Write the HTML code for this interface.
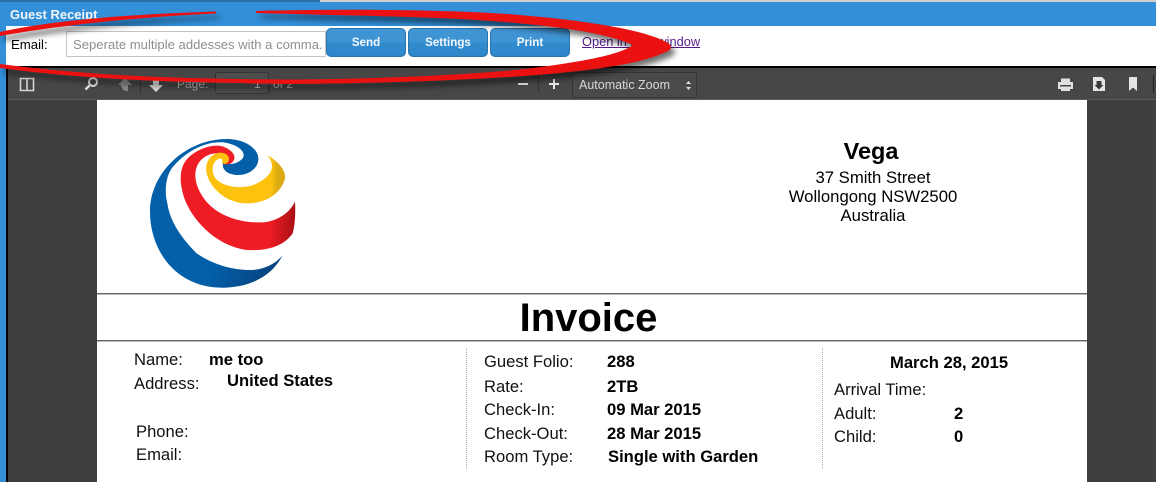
<!DOCTYPE html>
<html><head><meta charset="utf-8">
<style>
html,body{margin:0;padding:0;}
body{width:1156px;height:482px;overflow:hidden;position:relative;background:#fff;font-family:"Liberation Sans",sans-serif;}
.a{position:absolute;white-space:nowrap;}
.t{position:absolute;white-space:nowrap;line-height:20px;height:20px;font-size:16.600px;color:#111;margin-top:1px;}
.b{font-weight:bold;color:#000;}
.btn{position:absolute;top:28px;height:29px;box-sizing:border-box;border:1px solid #2a75ae;border-radius:5px;background:linear-gradient(#4195d5,#3f94d4 45%,#308bcf 55%,#2e86c8);color:#f4f9fd;font-weight:bold;font-size:11.600px;text-align:center;line-height:28px;}
svg{position:absolute;}
</style></head><body>
<div class="a" style="left:0;top:0;width:1156px;height:2px;background:#cfcfcf"></div>
<div class="a" style="left:0;top:0;width:320px;height:2px;background:#2b6ea8"></div>
<div class="a" style="left:0;top:2px;width:1156px;height:24px;background:#328fd8"></div>
<div class="a" style="left:0;top:26px;width:6px;height:456px;background:#328fd8"></div>
<div class="a" style="left:6px;top:26px;width:1150px;height:40px;background:#fff"></div>
<div class="a" style="left:10px;top:5px;color:#f2f7fc;font-weight:bold;font-size:13px;line-height:20px;">Guest Receipt</div>
<div class="a" style="left:11px;top:36px;color:#000;font-size:13.200px;line-height:18px;">Email:</div>
<div class="a" style="left:66px;top:31px;width:260px;height:26px;box-sizing:border-box;border:1px solid #c4c4c4;background:#fff;color:#8f8f8f;font-size:13.100px;line-height:26px;padding-left:6px;overflow:hidden;">Seperate multiple addesses with a comma.</div>
<div class="btn" style="left:326px;width:80px;">Send</div>
<div class="btn" style="left:408px;width:80px;">Settings</div>
<div class="btn" style="left:490px;width:80px;">Print</div>
<div class="a" style="left:582px;top:33px;color:#551a8b;font-size:12.800px;line-height:18px;text-decoration:underline;">Open in new window</div>

<div class="a" style="left:6px;top:66px;width:1150px;height:2px;background:#000"></div>
<div class="a" style="left:6px;top:68px;width:2px;height:414px;background:#000"></div>
<div class="a" style="left:8px;top:68px;width:1148px;height:414px;background:#3f3f3f"></div>
<div class="a" style="left:8px;top:68px;width:1148px;height:32px;background:#474747;box-shadow:inset 0 -1px 0 #5a5a5a"></div>

<svg style="left:0;top:68px" width="1156" height="32" viewBox="0 68 1156 32">
<path d="M20.500 78.500H33.500V90.500H20.500ZM27 78.500V90.500" fill="none" stroke="#d4d4d4" stroke-width="1.600"/>
<circle cx="93" cy="82" r="4" fill="none" stroke="#e0e0e0" stroke-width="2"/>
<path d="M89.500 85.500L85.500 89.500" stroke="#e0e0e0" stroke-width="2.500"/>
<path d="M118 85L125 78L132 85H128V91C126 91 122 91 121 85Z" fill="#8a8a8a"/>
<path d="M149 85L156 92L163 85H159V79H153V85Z" fill="#dadada"/>
<rect x="140" y="76" width="1" height="18" fill="#333"/>
<rect x="215.500" y="72.500" width="53" height="21" rx="2" fill="#4d4d4d" stroke="#333"/>
<rect x="518" y="83" width="10" height="2" fill="#e0e0e0"/>
<rect x="538" y="76" width="1" height="16" fill="#333"/>
<path d="M549 84H559M554 79V89" stroke="#e8e8e8" stroke-width="2"/>
<rect x="572.500" y="72.500" width="124" height="25" rx="2" fill="#4a4a4a" stroke="#363636"/>
<path d="M686 84L688.500 81L691 84ZM686 87L688.500 90L691 87Z" fill="#e0e0e0"/>
<path d="M1061 78.500H1070V82H1073V89H1070V91H1061V89H1058V82H1061Z" fill="#e0e0e0"/>
<rect x="1060" y="85" width="11" height="1.500" fill="#474747"/>
<path d="M1093 77H1102L1105 80V91H1093Z" fill="#e4e4e4"/>
<path d="M1096.500 81H1101.500V85H1103.500L1099 89.500L1094.500 85H1096.500Z" fill="#3a3a3a"/>
<path d="M1129 77H1137V91L1133 87.500L1129 91Z" fill="#e4e4e4"/>
<rect x="1153" y="75" width="1" height="18" fill="#222"/>
</svg>
<div class="a" style="left:177px;top:76px;color:#b5b5b5;font-size:12px;line-height:16px;">Page:</div>
<div class="a" style="left:254px;top:76px;color:#cfcfcf;font-size:12px;line-height:16px;">1</div>
<div class="a" style="left:273px;top:76px;color:#b5b5b5;font-size:12px;line-height:16px;">of 2</div>
<div class="a" style="left:579px;top:77px;color:#d9d9d9;font-size:12.500px;line-height:16px;">Automatic Zoom</div>

<div class="a" style="left:97px;top:100px;width:990px;height:382px;background:#fff"></div>

<svg style="left:130px;top:125px" width="180" height="175" viewBox="0 0 540 525">
<defs>
<linearGradient id="bl" x1="0.500" y1="0.800" x2="0.900" y2="1"><stop offset="0" stop-color="#0360a8"/><stop offset="1" stop-color="#07427f"/></linearGradient>
<linearGradient id="rd" x1="0.500" y1="0" x2="1" y2="0"><stop offset="0.550" stop-color="#ee1c25"/><stop offset="1" stop-color="#a80f14"/></linearGradient>
<linearGradient id="yl" x1="0.500" y1="0" x2="1" y2="0"><stop offset="0.650" stop-color="#fdc20e"/><stop offset="0.800" stop-color="#dcaa12"/></linearGradient>
</defs>
<path fill="url(#bl)" d="M457 392C420 465 340 490 270 488C140 485 60 380 60 260C60 140 170 42 290 42C350 42 388 75 385 105C382 135 350 150 325 150C295 150 272 135 280 110C292 122 322 118 338 100C350 82 325 58 280 52C225 48 165 80 125 130C105 160 104 205 112 235C120 290 155 340 200 385C250 420 310 435 360 435C400 435 435 418 457 392Z"/>
<path fill="url(#rd)" d="M495 230C497 265 495 300 488 325C460 365 410 378 350 375C270 365 195 300 165 225C145 170 148 125 175 98C205 70 250 55 280 65C305 75 318 90 312 105C305 118 290 122 278 115C290 112 298 100 285 92C262 78 225 85 205 115C188 145 195 185 225 225C265 275 335 295 400 292C445 288 480 262 495 230Z"/>
<path fill="url(#yl)" d="M412 90C445 110 468 135 465 160C455 200 415 235 350 235C290 235 240 190 230 145C222 110 245 85 270 83C290 83 300 95 296 108C290 120 282 118 275 112C280 105 275 98 265 102C248 110 242 135 255 158C275 185 330 195 375 178C425 155 440 125 412 90Z"/>
</svg>

<div class="a" style="left:756px;top:137px;width:230px;text-align:center;font-weight:bold;font-size:23.500px;line-height:28px;color:#000;">Vega</div>
<div class="a" style="left:758px;top:168px;width:230px;text-align:center;font-size:16.700px;line-height:19px;color:#000;">37 Smith Street<br>Wollongong NSW2500<br>Australia</div>

<div class="a" style="left:97px;top:293px;width:990px;height:2px;background:linear-gradient(#666 50%,#bbb 50%)"></div>
<div class="a" style="left:97px;top:340px;width:990px;height:2px;background:linear-gradient(#666 50%,#bbb 50%)"></div>
<div class="a" style="left:90px;top:295px;width:997px;text-align:center;font-weight:bold;font-size:40px;line-height:46px;color:#000;">Invoice</div>

<div class="a" style="left:466px;top:348px;width:0;height:121px;border-left:1px dotted #aaa"></div>
<div class="a" style="left:822px;top:348px;width:0;height:121px;border-left:1px dotted #aaa"></div>

<div class="t" style="left:134px;top:349px;">Name:</div>
<div class="t b" style="left:209px;top:349px;">me too</div>
<div class="t" style="left:134px;top:373px;">Address:</div>
<div class="t b" style="left:227px;top:370px;">United States</div>
<div class="t" style="left:136px;top:421px;">Phone:</div>
<div class="t" style="left:136px;top:444px;">Email:</div>

<div class="t" style="left:484px;top:351px;">Guest Folio:</div>
<div class="t b" style="left:607px;top:351px;">288</div>
<div class="t" style="left:484px;top:376px;">Rate:</div>
<div class="t b" style="left:607px;top:376px;">2TB</div>
<div class="t" style="left:484px;top:399px;">Check-In:</div>
<div class="t b" style="left:607px;top:399px;">09 Mar 2015</div>
<div class="t" style="left:484px;top:423px;">Check-Out:</div>
<div class="t b" style="left:607px;top:423px;">28 Mar 2015</div>
<div class="t" style="left:484px;top:446px;">Room Type:</div>
<div class="t b" style="left:608px;top:446px;">Single with Garden</div>

<div class="t b" style="left:890px;top:352px;">March 28, 2015</div>
<div class="t" style="left:834px;top:379px;">Arrival Time:</div>
<div class="t" style="left:834px;top:403px;">Adult:</div>
<div class="t b" style="left:954px;top:403px;">2</div>
<div class="t" style="left:834px;top:426px;">Child:</div>
<div class="t b" style="left:954px;top:426px;">0</div>

<svg style="left:0;top:0;filter:drop-shadow(4px 5px 3px rgba(0,0,0,.55))" width="1156" height="100" viewBox="0 0 1156 100">
<path fill="#ec1111" d="M0 32C60 19 140 14 216 11.500L216 13.500C140 17 60 25 0 36Z"/>
<path fill="#ec1111" d="M256 11C340 9 450 9 520 15C590 21 645 30 668 43C672 46 672 49 668 51C650 60 620 67 560 73C480 81 300 86 240 83C140 82 60 76 0 68L0 64C60 72 140 78 240 79C330 81 470 76 533 68C580 62 620 55 633 45C600 30 530 23 460 19C400 16 320 15 256 13Z"/>
</svg>
</body></html>
